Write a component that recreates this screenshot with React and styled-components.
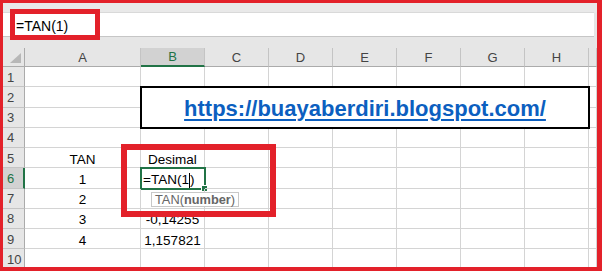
import React from 'react';
import styled, { createGlobalStyle, css } from 'styled-components';

const Global = createGlobalStyle`
  html, body { margin: 0; padding: 0; background: #fff; }
  body { font-family: "Liberation Sans", Arial, sans-serif; }
`;

const RED = '#e3212a';
const GREEN = '#217346';

const Frame = styled.div`
  position: relative;
  width: 602px;
  height: 271px;
  box-sizing: border-box;
  border-style: solid;
  border-color: ${RED};
  border-width: 3px 5px 4px 3px;
  background: #e6e6e6;
  overflow: hidden;
  display: flex;
  flex-direction: column;
`;

const TopStrip = styled.div`
  flex: none;
  height: 9px;
  background: #e9e9e9;
`;

const FormulaBar = styled.div`
  flex: none;
  height: 25px;
  box-sizing: border-box;
  margin-right: 3px;
  background: #fff;
  border-top: 1px solid #d9d9d9;
  border-bottom: 1px solid #c6c6c6;
  display: flex;
  align-items: center;
  padding: 3px 0 0 13px;
  font-size: 14px;
  color: #000;
`;

const Gap = styled.div`
  flex: none;
  height: 11px;
  background: #e6e6e6;
`;

const Sheet = styled.div`
  flex: 1;
  min-height: 0;
  display: grid;
  grid-template-columns: 22px 116px repeat(7, 64px) 1fr;
  grid-template-rows: 19px repeat(10, 20.25px);
  background: #fff;
`;

const Corner = styled.div`
  position: relative;
  background: #e6e6e6;
  border-right: 1px solid #ababab;
  border-bottom: 1px solid #ababab;
  box-sizing: border-box;
  &::after {
    content: '';
    position: absolute;
    right: 3px;
    bottom: 3px;
    border-style: solid;
    border-width: 0 0 10px 11px;
    border-color: transparent transparent #b7b7b7 transparent;
  }
`;

const ColHead = styled.div`
  box-sizing: border-box;
  display: flex;
  align-items: center;
  justify-content: center;
  font-size: 13px;
  color: #444;
  background: #e6e6e6;
  border-right: 1px solid #c4c4c4;
  border-bottom: 1px solid #ababab;
  ${(p) =>
    p.$active &&
    css`
      background: #d2d2d2;
      color: ${GREEN};
      border-bottom: 2px solid ${GREEN};
    `}
`;

const RowHead = styled.div`
  box-sizing: border-box;
  display: flex;
  align-items: center;
  padding: 1px 0 0 4px;
  font-size: 13px;
  color: #444;
  background: #e6e6e6;
  border-right: 1px solid #ababab;
  border-bottom: 1px solid #c4c4c4;
  ${(p) =>
    p.$active &&
    css`
      background: #d2d2d2;
      color: ${GREEN};
      border-right: 2px solid ${GREEN};
    `}
`;

const Cell = styled.div`
  position: relative;
  box-sizing: border-box;
  display: flex;
  align-items: center;
  justify-content: ${(p) => (p.$left ? 'flex-start' : 'center')};
  padding: 3px 0 0 ${(p) => (p.$left ? '2px' : '0')};
  font-size: 13.5px;
  color: #000;
  white-space: nowrap;
  border-right: 1px solid #d4d4d4;
  border-bottom: 1px solid #d4d4d4;
`;

const LinkCell = styled.div`
  grid-column: 3 / 10;
  grid-row: 3 / 5;
  margin: -1px;
  border: 2px solid #000;
  background: #fff;
  display: flex;
  align-items: center;
  justify-content: center;
  padding-top: 2px;
  z-index: 1;
`;

const Link = styled.a`
  font-family: "Liberation Sans", Arial, sans-serif;
  font-weight: 700;
  font-size: 22px;
  color: #0c5fc0;
  text-decoration: underline;
  text-decoration-thickness: 2px;
  text-underline-offset: 3px;
`;

const Selection = styled.div`
  position: absolute;
  top: -1px;
  left: -1px;
  right: -2px;
  bottom: -2px;
  border: 2px solid ${GREEN};
  pointer-events: none;
`;

const Handle = styled.div`
  position: absolute;
  right: -4px;
  bottom: -4px;
  width: 5px;
  height: 5px;
  background: ${GREEN};
  border: 1px solid #fff;
`;

const Caret = styled.span`
  display: inline-block;
  width: 1px;
  height: 16px;
  background: #000;
  margin: 0 0 -3px 0;
`;

const Tooltip = styled.div`
  position: absolute;
  top: calc(100% + 4px);
  left: 10px;
  z-index: 3;
  height: 15px;
  box-sizing: border-box;
  padding: 0 3px;
  display: flex;
  align-items: center;
  background: #fff;
  border: 1px solid #c8c8c8;
  font-size: 12.8px;
  color: #666;
  b { font-weight: 700; }
`;

const Annot = styled.div`
  position: absolute;
  box-sizing: border-box;
  border: ${(p) => p.$w}px solid ${RED};
  pointer-events: none;
  z-index: 5;
`;

const cols = ['A', 'B', 'C', 'D', 'E', 'F', 'G', 'H'];

const data = {
  5: { A: 'TAN', B: 'Desimal' },
  6: { A: '1' },
  7: { A: '2' },
  8: { A: '3', B: '-0,14255' },
  9: { A: '4', B: '1,157821' },
};

export default function App() {
  const rows = Array.from({ length: 10 }, (_, i) => i + 1);
  return (
    <>
      <Global />
      <Frame>
        <TopStrip />
        <FormulaBar>=TAN(1)</FormulaBar>
        <Gap />
        <Sheet>
          <Corner />
          {cols.map((c) => (
            <ColHead key={c} $active={c === 'B'}>
              {c}
            </ColHead>
          ))}
          <ColHead />
          {rows.map((r) => (
            <React.Fragment key={r}>
              <RowHead $active={r === 6}>{r}</RowHead>
              {cols.map((c) => {
                if ((r === 2 || r === 3) && c !== 'A') {
                  if (r === 2 && c === 'B') {
                    return (
                      <LinkCell key={c}>
                        <Link href="#">https://buayaberdiri.blogspot.com/</Link>
                      </LinkCell>
                    );
                  }
                  return null;
                }
                if (r === 6 && c === 'B') {
                  return (
                    <Cell key={c} $left>
                      =TAN(1<Caret />)
                      <Selection>
                        <Handle />
                      </Selection>
                      <Tooltip>
                        TAN(<b>number</b>)
                      </Tooltip>
                    </Cell>
                  );
                }
                return <Cell key={c}>{data[r] && data[r][c]}</Cell>;
              })}
              <Cell />
            </React.Fragment>
          ))}
        </Sheet>
        <Annot $w={5} style={{ left: 7, top: 6, width: 90, height: 31 }} />
        <Annot $w={6} style={{ left: 118, top: 141, width: 155, height: 73 }} />
      </Frame>
    </>
  );
}
